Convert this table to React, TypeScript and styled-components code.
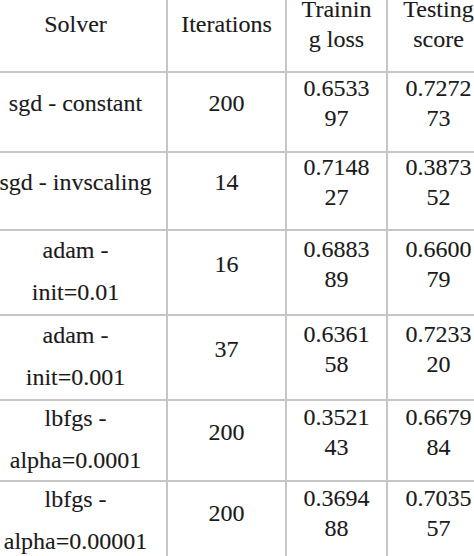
import React from "react";
import styled, { createGlobalStyle } from "styled-components";

const GlobalStyle = createGlobalStyle`
  html,
  body {
    margin: 0;
    padding: 0;
    background: #fff;
    font-family: "Liberation Serif", "DejaVu Serif", serif;
  }
`;

const Page = styled.div`
  width: 474px;
  height: 556px;
  overflow: hidden;
  background-color: #fff;
`;

// the screenshot is a crop of a bigger table, so the grid starts above and left of the page
const Table = styled.div`
  display: grid;
  grid-template-columns: 183px 119px 101px 103px;
  width: max-content;
  margin: -20px 0 0 -15px;
  font-family: "Liberation Serif", "DejaVu Serif", serif;
  font-size: 24px;
  color: #1a1a1a;
  -webkit-text-stroke: 0.12px #1a1a1a;
`;

const Cell = styled.div<{ $height: number; $lead?: number; $lift?: number }>`
  box-sizing: border-box;
  height: ${(p) => p.$height}px;
  padding-bottom: ${(p) => p.$lift ?? 18}px;
  border-right: 2px solid #c6c6c6;
  border-bottom: 2px solid #c6c6c6;
  display: flex;
  flex-direction: column;
  align-items: center;
  justify-content: center;
  line-height: ${(p) => p.$lead ?? 30}px;
  text-align: center;
  white-space: nowrap;
`;

const Line = styled.span`
  display: block;
`;

type Row = {
  height: number;
  solver: string[];
  iterations: string;
  loss: string[];
  score: string[];
};

const rows: Row[] = [
  { height: 80, solver: ["sgd - constant"], iterations: "200", loss: ["0.6533", "97"], score: ["0.7272", "73"] },
  { height: 78, solver: ["sgd - invscaling"], iterations: "14", loss: ["0.7148", "27"], score: ["0.3873", "52"] },
  { height: 85, solver: ["adam -", "init=0.01"], iterations: "16", loss: ["0.6883", "89"], score: ["0.6600", "79"] },
  { height: 85, solver: ["adam -", "init=0.001"], iterations: "37", loss: ["0.6361", "58"], score: ["0.7233", "20"] },
  { height: 81, solver: ["lbfgs -", "alpha=0.0001"], iterations: "200", loss: ["0.3521", "43"], score: ["0.6679", "84"] },
  { height: 81, solver: ["lbfgs -", "alpha=0.00001"], iterations: "200", loss: ["0.3694", "88"], score: ["0.7035", "57"] },
];

const Lines = ({ items }: { items: string[] }) => (
  <>
    {items.map((t, i) => (
      <Line key={i}>{t}</Line>
    ))}
  </>
);

const App = () => {
  return (
    <>
      <GlobalStyle />
      <Page>
        <Table>
          <Cell $height={93} $lift={3}>Solver</Cell>
          <Cell $height={93} $lift={3}>Iterations</Cell>
          <Cell $height={93} $lift={3}>
            <Lines items={["Trainin", "g loss"]} />
          </Cell>
          <Cell $height={93} $lift={3}>
            <Lines items={["Testing", "score"]} />
          </Cell>

          {rows.map((r, i) => {
            const tall = r.solver.length > 1;
            return (
              <React.Fragment key={i}>
                <Cell $height={r.height} $lead={tall ? 42 : 30} $lift={tall ? 4 : 18}>
                  <Lines items={r.solver} />
                </Cell>
                <Cell $height={r.height}>{r.iterations}</Cell>
                <Cell $height={r.height}>
                  <Lines items={r.loss} />
                </Cell>
                <Cell $height={r.height}>
                  <Lines items={r.score} />
                </Cell>
              </React.Fragment>
            );
          })}
        </Table>
      </Page>
    </>
  );
};

export default App;
